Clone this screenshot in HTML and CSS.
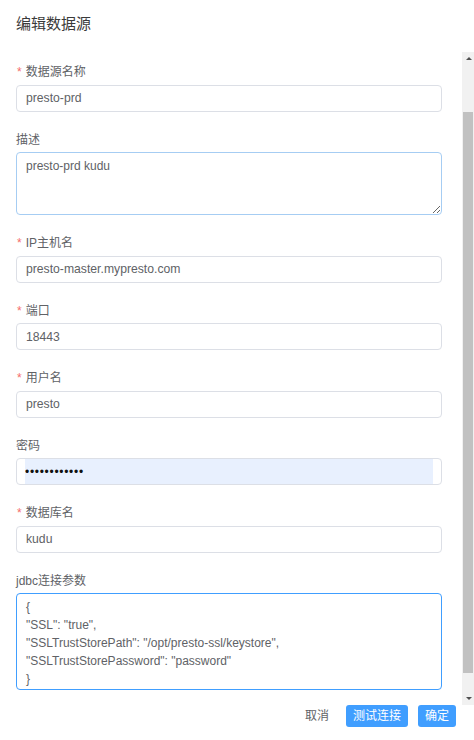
FILE: index.html
```html
<!DOCTYPE html>
<html lang="zh-CN">
<head>
<meta charset="utf-8">
<title>编辑数据源</title>
<link rel="stylesheet" href="styles.css">
</head>
<body>
<div class="dialog">
  <div class="dialog-header">编辑数据源</div>
  <div class="dialog-main">
    <form class="form">
      <div class="item">
        <label class="label required">数据源名称</label>
        <input class="input" type="text" value="presto-prd">
      </div>
      <div class="item">
        <label class="label">描述</label>
        <textarea class="textarea textarea-desc">presto-prd kudu</textarea>
      </div>
      <div class="item">
        <label class="label required">IP主机名</label>
        <input class="input" type="text" value="presto-master.mypresto.com">
      </div>
      <div class="item">
        <label class="label required">端口</label>
        <input class="input" type="text" value="18443">
      </div>
      <div class="item">
        <label class="label required">用户名</label>
        <input class="input" type="text" value="presto">
      </div>
      <div class="item">
        <label class="label">密码</label>
        <input class="input input-autofill" type="password" value="passwordpass">
      </div>
      <div class="item">
        <label class="label required">数据库名</label>
        <input class="input" type="text" value="kudu">
      </div>
      <div class="item">
        <label class="label">jdbc连接参数</label>
        <textarea class="textarea textarea-json">{
"SSL": "true",
"SSLTrustStorePath": "/opt/presto-ssl/keystore",
"SSLTrustStorePassword": "password"
}</textarea>
      </div>
    </form>
    <div class="scrollbar">
      <div class="sb-arrow sb-up"></div>
      <div class="sb-track"><div class="sb-thumb"></div></div>
      <div class="sb-arrow sb-down"></div>
    </div>
  </div>
  <div class="dialog-footer">
    <button class="btn btn-text" type="button">取消</button>
    <button class="btn btn-primary" type="button">测试连接</button>
    <button class="btn btn-primary" type="button">确定</button>
  </div>
</div>
</body>
</html>
```

FILE: styles.css
```css
* { box-sizing: border-box; }
html, body {
  margin: 0;
  padding: 0;
  background: #fff;
}
body {
  font-family: "Liberation Sans", "Noto Sans CJK SC", sans-serif;
  color: #606266;
  font-size: 12px;
}
.dialog {
  width: 474px;
  height: 740px;
  display: flex;
  flex-direction: column;
}
.dialog-header {
  padding: 13px 16px 0;
  height: 52px;
  font-size: 15px;
  line-height: 22px;
  color: #3a3a3a;
}
.dialog-main {
  display: flex;
  height: 653px;
  overflow: hidden;
}
.form {
  flex: 1;
  padding: 10px 20px 0 16px;
  margin: 0;
}
.item {
  margin-bottom: 18px;
}
.label {
  display: block;
  line-height: 20px;
  margin-bottom: 2.5px;
  font-size: 12px;
  color: #606266;
}
.label.required::before {
  content: "*";
  color: #f56c6c;
  margin-right: 4px;
  margin-left: 1px;
}
.input, .textarea {
  display: block;
  width: 426px;
  font-family: "Liberation Sans", "Noto Sans CJK SC", sans-serif;
  font-size: 12px;
  color: #606266;
  border: 1px solid #dcdfe6;
  border-radius: 4px;
  background: #fff;
  outline: none;
  margin: 0;
}
.input {
  height: 27px;
  padding: 0 9px;
  font-size: 12.2px;
}
.input-autofill {
  padding: 0 8px;
  background-color: #e8f0fe;
  background-clip: content-box;
  color: #111;
  font-size: 12px;
  letter-spacing: 0.7px;
}
.textarea {
  padding: 3.5px 9px;
  line-height: 18px;
}
.textarea-desc {
  height: 63px;
  border-color: #a6cdf3;
  resize: vertical;
}
.textarea-json {
  height: 97px;
  border-color: #409eff;
  resize: none;
  overflow: hidden;
}
.scrollbar {
  width: 12px;
  flex: none;
  display: flex;
  flex-direction: column;
  background: #f1f1f1;
}
.sb-arrow {
  height: 12px;
  flex: none;
  position: relative;
}
.sb-up::after, .sb-down::after {
  content: "";
  position: absolute;
  left: 4px;
  width: 0;
  height: 0;
  border-left: 3px solid transparent;
  border-right: 3px solid transparent;
}
.sb-up::after {
  top: 5px;
  border-bottom: 3px solid #505050;
}
.sb-down::after {
  top: 4px;
  border-top: 3px solid #505050;
}
.sb-track {
  flex: 1;
  padding: 48px 1px 20px;
  display: flex;
}
.sb-thumb {
  flex: 1;
  background: #c1c1c1;
}
.dialog-footer {
  display: flex;
  justify-content: flex-end;
  align-items: flex-start;
  padding: 0 18px 0 0;
  gap: 10px;
}
.btn {
  font-family: "Liberation Sans", "Noto Sans CJK SC", sans-serif;
  font-size: 12px;
  height: 22px;
  line-height: 22px;
  border: none;
  border-radius: 3px;
  padding: 0 12px;
  cursor: pointer;
}
.btn-text {
  background: transparent;
  color: #606266;
  padding: 0 7px;
  margin-right: 0;
}
.btn-primary {
  background: #409eff;
  color: #fff;
  padding: 0 7px;
}
```
